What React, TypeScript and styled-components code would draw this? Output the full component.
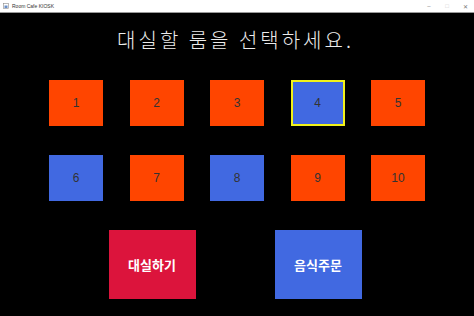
import React, { useState } from 'react';
import styled, { createGlobalStyle } from 'styled-components';

const GlobalStyle = createGlobalStyle`
  html, body {
    margin: 0;
    padding: 0;
    background: #000;
  }
  * {
    box-sizing: border-box;
  }
`;

// Window frame
const Window = styled.div`
  width: 474px;
  height: 316px;
  display: flex;
  flex-direction: column;
  background: #000;
  overflow: hidden;
  font-family: "Noto Sans CJK KR", "Liberation Sans", sans-serif;
`;

const TitleBar = styled.div`
  height: 13px;
  flex: 0 0 13px;
  display: flex;
  align-items: center;
  background: #fff;
  border-bottom: 1px solid #9a9a9a;
  padding-left: 3px;
`;

const AppIcon = styled.svg`
  width: 6px;
  height: 6px;
  margin-right: 3px;
`;

const WindowTitle = styled.span`
  font-family: "Liberation Sans", sans-serif;
  font-size: 5px;
  color: #333;
  flex: 1;
`;

const Controls = styled.div`
  display: flex;
  align-items: center;
  height: 100%;
`;

const ControlButton = styled.span<{ $dim?: boolean }>`
  width: 18px;
  display: flex;
  align-items: center;
  justify-content: center;
  font-family: "Liberation Sans", sans-serif;
  font-size: 6px;
  color: ${(p) => (p.$dim ? '#ccc' : '#777')};
`;

const Main = styled.div`
  flex: 1;
  display: flex;
  flex-direction: column;
  align-items: center;
`;

const Heading = styled.h1`
  margin: 15px 0 0 -3px;
  height: 24px;
  line-height: 24px;
  font-size: 20px;
  font-weight: 300;
  letter-spacing: 3px;
  color: #ececec;
`;

const RoomGrid = styled.div`
  margin-top: 28px;
  display: grid;
  grid-template-columns: repeat(5, 54px);
  grid-auto-rows: 46px;
  column-gap: 26.5px;
  row-gap: 29px;
`;

const RoomButton = styled.button<{ $busy: boolean; $selected: boolean }>`
  margin: 0;
  padding: 0;
  border: ${(p) => (p.$selected ? '2px solid #f2f21a' : 'none')};
  background: ${(p) => (p.$busy ? '#ff4500' : '#4169e1')};
  color: #333;
  font-family: "Liberation Sans", sans-serif;
  font-size: 12px;
  cursor: pointer;
`;

const ActionRow = styled.div`
  margin-top: 29px;
  display: flex;
  gap: 79px;
  padding-right: 4px;
`;

const ActionButton = styled.button<{ $color: string }>`
  width: 87px;
  height: 69px;
  margin: 0;
  padding: 0;
  border: none;
  background: ${(p) => p.$color};
  color: #fff;
  font-family: "Noto Sans CJK KR", sans-serif;
  font-size: 13px;
  font-weight: 700;
  cursor: pointer;
`;

// orange = occupied, blue = free
const rooms = [
  { no: 1, busy: true },
  { no: 2, busy: true },
  { no: 3, busy: true },
  { no: 4, busy: false },
  { no: 5, busy: true },
  { no: 6, busy: false },
  { no: 7, busy: true },
  { no: 8, busy: false },
  { no: 9, busy: true },
  { no: 10, busy: true },
];

const App: React.FC = () => {
  const [selected, setSelected] = useState(4);

  return (
    <>
      <GlobalStyle />
      <Window>
        <TitleBar>
          <AppIcon viewBox="0 0 6 6">
            <rect x="0.5" y="0.5" width="5" height="5" fill="#fff" stroke="#8a8a8a" strokeWidth="0.6" />
            <rect x="1.5" y="2.5" width="3" height="2.5" fill="#6a8fc8" />
          </AppIcon>
          <WindowTitle>Room Cafe KIOSK</WindowTitle>
          <Controls>
            <ControlButton>–</ControlButton>
            <ControlButton $dim>□</ControlButton>
            <ControlButton>✕</ControlButton>
          </Controls>
        </TitleBar>
        <Main>
          <Heading>대실할 룸을 선택하세요.</Heading>
          <RoomGrid>
            {rooms.map((r) => (
              <RoomButton
                key={r.no}
                $busy={r.busy}
                $selected={selected === r.no}
                onClick={() => setSelected(r.no)}
              >
                {r.no}
              </RoomButton>
            ))}
          </RoomGrid>
          <ActionRow>
            <ActionButton $color="#dc143c">대실하기</ActionButton>
            <ActionButton $color="#4169e1">음식주문</ActionButton>
          </ActionRow>
        </Main>
      </Window>
    </>
  );
};

export default App;
